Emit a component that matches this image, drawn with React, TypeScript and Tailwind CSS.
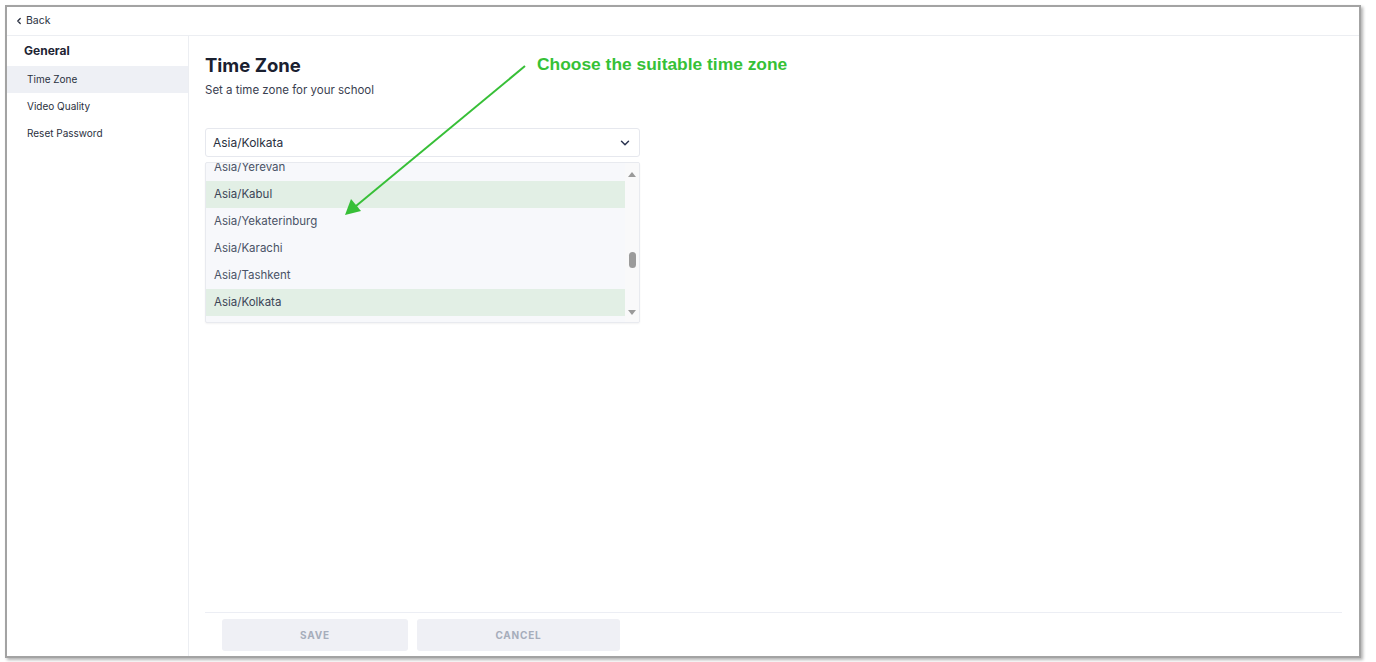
import { ChevronDown, ChevronLeft } from "lucide-react";

const zones = [
  { name: "Asia/Yerevan", on: false },
  { name: "Asia/Kabul", on: true },
  { name: "Asia/Yekaterinburg", on: false },
  { name: "Asia/Karachi", on: false },
  { name: "Asia/Tashkent", on: false },
  { name: "Asia/Kolkata", on: true },
];

const menu = ["Time Zone", "Video Quality", "Reset Password"];

export default function App() {
  return (
    <div className="relative h-[662px] w-[1376px] overflow-hidden bg-white pl-[5px] pt-[5px] font-['Inter',sans-serif] text-[#1e2433]">
      <div className="flex h-[653px] w-[1356px] flex-col border-2 border-[#a3a3a3] bg-white shadow-[2px_2px_3px_rgba(0,0,0,0.3)]">
        {/* top bar */}
        <div className="flex h-[29px] shrink-0 items-center gap-[2px] border-b border-[#eceef2] pl-[7px] text-[10.5px] text-[#2a3040]">
          <ChevronLeft size={10} strokeWidth={3} />
          <span>Back</span>
        </div>

        <div className="flex flex-1">
          {/* sidebar */}
          <div className="w-[182px] shrink-0 border-r border-[#eceef2] pt-[7px]">
            <div className="h-[23px] pl-[17px] text-[12px] font-bold leading-[15px] text-[#1e2433]">General</div>
            {menu.map((m, i) => (
              <div
                key={m}
                className={
                  i === 0
                    ? "flex h-[27px] items-center bg-[#eef0f5] pl-[20px] text-[10px] text-[#2a3040]"
                    : "flex h-[27px] items-center pl-[20px] text-[10px] text-[#2a3040]"
                }
              >
                {m}
              </div>
            ))}
          </div>

          {/* main */}
          <div className="flex flex-1 flex-col pl-[16px] pr-[17px]">
            <div className="flex-1 pt-[17px]">
              <h1 className="text-[18.5px] font-bold leading-[24px] text-[#1a2030]">Time Zone</h1>
              <p className="mt-[5px] text-[11.5px] leading-[16px] text-[#3a4050]">Set a time zone for your school</p>

              <div className="mt-[30px] flex h-[29px] w-[435px] items-center justify-between rounded-[3px] border border-[#e6e8ee] pl-[7px] pr-[7px] text-[12px] text-[#2a3040]">
                <span>Asia/Kolkata</span>
                <ChevronDown size={14} strokeWidth={2.5} className="text-[#2a3350]" />
              </div>

              <div className="mt-[5px] flex h-[161px] w-[435px] overflow-hidden rounded-[2px] border border-[#e8eaef] bg-[#f7f8fb] shadow-[0_1px_2px_rgba(0,0,0,0.05)]">
                <div className="-mt-[9px] flex-1">
                  {zones.map((z) => (
                    <div
                      key={z.name}
                      className={
                        z.on
                          ? "flex h-[27px] items-center bg-[#e2efe5] pl-[8px] text-[11.5px] text-[#3b4456]"
                          : "flex h-[27px] items-center pl-[8px] text-[11.5px] text-[#4a5366]"
                      }
                    >
                      {z.name}
                    </div>
                  ))}
                </div>
                <div className="flex w-[14px] shrink-0 flex-col items-center bg-[#f9f9fa] pb-[7px] pt-[9px]">
                  <div className="h-0 w-0 border-x-[4px] border-b-[5px] border-x-transparent border-b-[#9a9a9a]" />
                  <div className="mt-[75px] h-[16px] w-[7px] rounded-[4px] bg-[#9b9b9b]" />
                  <div className="flex-1" />
                  <div className="h-0 w-0 border-x-[4px] border-t-[5px] border-x-transparent border-t-[#9a9a9a]" />
                </div>
              </div>
            </div>

            {/* footer */}
            <div className="flex h-[44px] shrink-0 items-start gap-[9px] border-t border-[#eceef4] pl-[17px] pt-[6px]">
              <button className="h-[32px] w-[186px] rounded-[3px] bg-[#eff0f5] text-[10px] font-bold tracking-[0.08em] text-[#a6adbb]">
                SAVE
              </button>
              <button className="h-[32px] w-[203px] rounded-[3px] bg-[#eff0f5] text-[10px] font-bold tracking-[0.08em] text-[#a6adbb]">
                CANCEL
              </button>
            </div>
          </div>
        </div>
      </div>

      {/* annotation */}
      <svg className="absolute left-0 top-0" width="1376" height="662" viewBox="0 0 1376 662">
        <line x1="525" y1="66" x2="356" y2="206" stroke="#37bf37" strokeWidth="2" />
        <polygon points="345,215 351,199 361,211" fill="#37bf37" />
      </svg>
      <div className="absolute left-[537px] top-[54px] font-['Liberation_Sans',Arial,sans-serif] text-[17.4px] font-bold leading-[21px] text-[#36c136]">
        Choose the suitable time zone
      </div>
    </div>
  );
}
